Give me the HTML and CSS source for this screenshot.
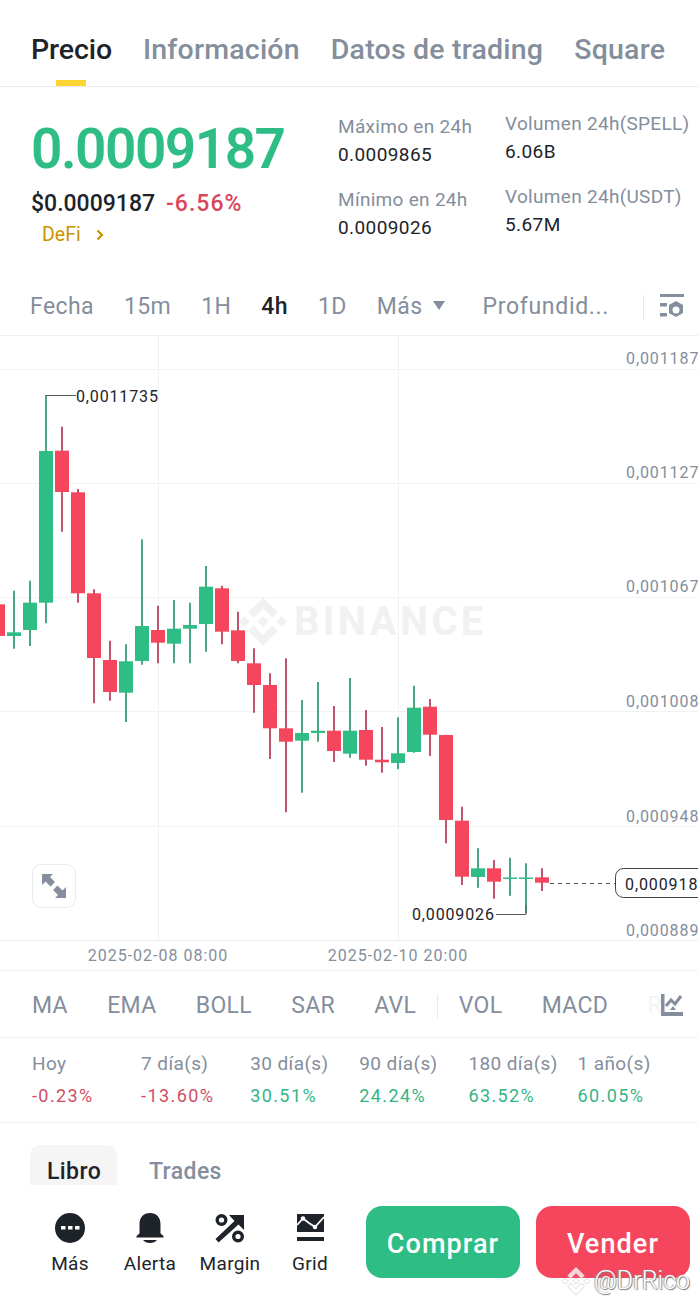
FILE: index.html
```html
<!DOCTYPE html>
<html lang="es">
<head>
<meta charset="utf-8">
<title>SPELL/USDT</title>
<link rel="stylesheet" href="styles.css">
</head>
<body>
<div class="page">
  <nav class="tabs">
    <a class="tab tab-active">Precio</a>
    <a class="tab">Información</a>
    <a class="tab">Datos de trading</a>
    <a class="tab">Square</a>
  </nav>

  <section class="summary">
    <div class="headline">
      <div class="big-price">0.0009187</div>
      <div class="sub-price"><span class="fiat">$0.0009187</span><span class="change">-6.56%</span></div>
      <div class="tag">DeFi
        <svg class="tag-arrow" viewBox="0 0 8 12" width="8" height="12"><path d="M1.500 1.500 6 6l-4.500 4.500" fill="none" stroke="#C99400" stroke-width="2.200"/></svg>
      </div>
    </div>
    <div class="stats stats-a">
      <div class="stat-label">Máximo en 24h</div>
      <div class="stat-value">0.0009865</div>
      <div class="stat-label stat-gap">Mínimo en 24h</div>
      <div class="stat-value">0.0009026</div>
    </div>
    <div class="stats stats-b">
      <div class="stat-label">Volumen 24h(SPELL)</div>
      <div class="stat-value">6.06B</div>
      <div class="stat-label stat-gap">Volumen 24h(USDT)</div>
      <div class="stat-value">5.67M</div>
    </div>
  </section>

  <div class="toolbar">
    <span>Fecha</span><span>15m</span><span>1H</span><span class="on">4h</span><span>1D</span>
    <span class="more">Más<svg viewBox="0 0 12 9" width="12" height="9"><path d="M0 0h12L6 9z" fill="#848E9C"/></svg></span>
    <span class="depth">Profundid...</span>
    <i class="vr"></i>
    <svg class="tool-icon" viewBox="0 0 24 24" width="24" height="24"><path d="M0 0h24v3H0zM0 9h7v3.500H0zM0 19h7v3.500H0z" fill="#848E9C"/><path fill-rule="evenodd" d="M16 7l7 4v8l-7 4-7-4v-8zm0 5.500a3.500 3.500 0 1 0 0 7 3.500 3.500 0 0 0 0-7z" fill="#848E9C"/></svg>
  </div>

  <div class="chart">
    <svg class="chart-svg" viewBox="0 336 698 634" width="698" height="634">
      <g class="grid">
        <path d="M0 369.500H698M0 483.500H698M0 597.500H698M0 711.500H698M0 826.500H698M158.500 336V940M398.500 336V940"/>
        <path class="grid-strong" d="M0 940.500H698"/>
      </g>
      <g class="mark" transform="translate(239 597.500) scale(.38)">
        <path d="M38.730 53.200l24.590-24.580 24.600 24.600 14.300-14.310L63.320 0 24.430 38.900z"/>
        <path d="M0 63.310 14.300 49l14.310 14.310-14.310 14.300z"/>
        <path d="M38.730 73.410 63.320 98l24.600-24.600 14.310 14.290-38.900 38.910-38.910-38.880z"/>
        <path d="M98 63.310 112.300 49l14.310 14.300-14.310 14.320z"/>
        <path d="M77.830 63.300 63.320 48.780 48.810 63.280l14.510 14.500z"/>
      </g>
      <text class="mark-text" x="294" y="635">BINANCE</text>

      <g class="wick-g">
        <path d="M14 590.700V648.700M30 580.700V646M46 395V623.300M126 644.300V722M142 539.300V664.700M174 600V663.300M190 602.700V663.300M206 566V651.700M302 700V792.700M318 682V741.700M350 678V757.700M398 717.300V769.300M414 685.700V752.700M478 848.300V887.700M510 857.700V895.700M526 863.300V913.300"/>
      </g>
      <g class="wick-r">
        <path d="M62 426.700V531.700M78 489V602.700M94 589.300V703.300M110 640.700V700.700M158 605.700V663.300M222 585.700V644.300M238 611.700V663.300M254 648.300V712.700M270 673.300V759M286 658.300V812.300M334 706V762M366 710V765.700M382 727V772.700M430 699V756M446 734.700V843.300M462 806.700V885M494 860V898.700M542 868.300V891"/>
      </g>
      <g class="body-g">
        <rect x="7" y="632.300" width="14" height="3.700"/>
        <rect x="23" y="602.700" width="14" height="27.300"/>
        <rect x="39" y="451" width="14" height="151.700"/>
        <rect x="119" y="661.300" width="14" height="31.400"/>
        <rect x="135" y="626" width="14" height="35"/>
        <rect x="167" y="628.700" width="14" height="15"/>
        <rect x="183" y="625" width="14" height="3.700"/>
        <rect x="199" y="586.700" width="14" height="37.300"/>
        <rect x="295" y="733" width="14" height="7.700"/>
        <rect x="311" y="730.700" width="14" height="2.300"/>
        <rect x="343" y="730.700" width="14" height="23"/>
        <rect x="391" y="753.300" width="14" height="9.700"/>
        <rect x="407" y="707.700" width="14" height="44.300"/>
        <rect x="471" y="868.300" width="14" height="8.700"/>
        <rect x="503" y="877.500" width="14" height="1.500"/>
        <rect x="519" y="877.500" width="14" height="1.500"/>
      </g>
      <g class="body-r">
        <rect x="-9" y="604.300" width="14" height="31.700"/>
        <rect x="55" y="450.700" width="14" height="41.300"/>
        <rect x="71" y="492.300" width="14" height="101"/>
        <rect x="87" y="593.300" width="14" height="64.700"/>
        <rect x="103" y="660" width="14" height="32"/>
        <rect x="151" y="630" width="14" height="12.700"/>
        <rect x="215" y="588.300" width="14" height="43.400"/>
        <rect x="231" y="630.300" width="14" height="30.700"/>
        <rect x="247" y="663.300" width="14" height="21.700"/>
        <rect x="263" y="685" width="14" height="43.300"/>
        <rect x="279" y="728.300" width="14" height="13.400"/>
        <rect x="327" y="730.700" width="14" height="20.300"/>
        <rect x="359" y="730" width="14" height="29.700"/>
        <rect x="375" y="759.700" width="14" height="2.600"/>
        <rect x="423" y="706.700" width="14" height="28"/>
        <rect x="439" y="735" width="14" height="85"/>
        <rect x="455" y="820.700" width="14" height="56"/>
        <rect x="487" y="868.300" width="14" height="13.400"/>
        <rect x="535" y="877.300" width="14" height="5.400"/>
      </g>

      <path class="leader" d="M46 395.500H76M496 914.500H526V905"/>
      <path class="last-line" d="M550 883.500H615"/>
      <text class="extreme" x="76" y="401.500">0,0011735</text>
      <text class="extreme" x="412" y="920">0,0009026</text>

      <g class="axis">
        <text x="626" y="364">0,001187</text>
        <text x="626" y="478">0,001127</text>
        <text x="626" y="592">0,001067</text>
        <text x="626" y="707">0,001008</text>
        <text x="626" y="822">0,000948</text>
        <text x="626" y="936">0,000889</text>
      </g>
      <rect class="last-box" x="615.500" y="868.500" width="100" height="29" rx="8"/>
      <text class="last-text" x="625" y="890">0,000918</text>
      <g class="axis axis-x">
        <text x="158" y="961">2025-02-08 08:00</text>
        <text x="398" y="961">2025-02-10 20:00</text>
      </g>
    </svg>
    <button class="expand" type="button" aria-label="Expandir">
      <svg viewBox="0 0 26 26" width="26" height="26"><path d="M1 1h11L9 4l5 5-4.500 4.500-5-5L1 12zM25 25H14l3-3-5-5 4.500-4.500 5 5L25 14z" fill="#848E9C"/></svg>
    </button>
  </div>

  <div class="indicators">
    <span>MA</span><span>EMA</span><span>BOLL</span><span>SAR</span><span>AVL</span>
    <i class="vr vr-ind"></i>
    <span>VOL</span><span>MACD</span>
    <span class="fade">R</span>
    <svg class="ind-icon" viewBox="0 0 22 22" width="22" height="22"><path d="M0 0h3.500v18H22v4H0z" fill="#848E9C"/><path d="M5 12 10 6l4 4 6-8" fill="none" stroke="#848E9C" stroke-width="3"/><path d="M9 16l3-4 3 4z" fill="#848E9C"/></svg>
  </div>

  <div class="periods">
    <div class="period"><div class="p-label">Hoy</div><div class="p-val down">-0.23%</div></div>
    <div class="period"><div class="p-label">7 día(s)</div><div class="p-val down">-13.60%</div></div>
    <div class="period"><div class="p-label">30 día(s)</div><div class="p-val up">30.51%</div></div>
    <div class="period"><div class="p-label">90 día(s)</div><div class="p-val up">24.24%</div></div>
    <div class="period"><div class="p-label">180 día(s)</div><div class="p-val up">63.52%</div></div>
    <div class="period"><div class="p-label">1 año(s)</div><div class="p-val up">60.05%</div></div>
  </div>

  <div class="book-tabs">
    <span class="book-tab book-on">Libro</span>
    <span class="book-tab">Trades</span>
  </div>

  <footer class="actions">
    <div class="action">
      <svg viewBox="0 0 30 30" width="30" height="30"><circle cx="15" cy="15" r="15" fill="#1E2329"/><path d="M6 13h4.500v3.500H6zM13 13h4.500v3.500H13zM20 13h4.500v3.500H20z" fill="#fff"/></svg>
      <span>Más</span>
    </div>
    <div class="action">
      <svg viewBox="0 0 30 30" width="30" height="30"><path d="M15 0c6.500 0 10.500 4.500 10.500 11v9.500l3 2.500v1.500H1.500V23l3-2.500V11C4.500 4.500 8.500 0 15 0z" fill="#1E2329"/><path d="M8 27h14c-1.500 2-4 3-7 3s-5.500-1-7-3z" fill="#1E2329"/></svg>
      <span>Alerta</span>
    </div>
    <div class="action">
      <svg viewBox="0 0 30 30" width="30" height="30"><path d="M14 2h15v15l-5.500-5.500L3.500 29.500 0.500 26l19-18z" fill="#1E2329"/><circle cx="6.500" cy="7" r="4.300" fill="#fff" stroke="#1E2329" stroke-width="3.400"/><circle cx="23" cy="23.500" r="4.300" fill="#fff" stroke="#1E2329" stroke-width="3.400"/></svg>
      <span>Margin</span>
    </div>
    <div class="action">
      <svg viewBox="0 0 30 30" width="30" height="30"><path d="M2 1h27v18H2zM2 24h27v4H2z" fill="#1E2329"/><path d="M2 12l6-6.500 6 4.500 6 4 9-10" fill="none" stroke="#fff" stroke-width="1.800"/><circle cx="8" cy="5.500" r="2.200" fill="#fff"/><circle cx="20" cy="14" r="2.200" fill="#fff"/></svg>
      <span>Grid</span>
    </div>
    <button class="trade buy" type="button">Comprar</button>
    <button class="trade sell" type="button">Vender</button>
  </footer>

  <div class="credit">
    <svg viewBox="0 0 126.610 126.610" width="28" height="28"><path d="M38.730 53.200l24.590-24.580 24.600 24.600 14.300-14.310L63.320 0 24.430 38.900z" fill="#fbd5da" stroke="#aaa" stroke-width="2"/><path d="M0 63.310 14.300 49l14.310 14.310-14.310 14.300zM38.730 73.410 63.320 98l24.600-24.600 14.310 14.290-38.900 38.910-38.910-38.880zM98 63.310 112.300 49l14.310 14.300-14.310 14.320zM77.830 63.300 63.320 48.780 48.810 63.280l14.510 14.500z" fill="#fff" stroke="#aaa" stroke-width="2"/></svg>
    <span>@DrRico</span>
  </div>
</div>
</body>
</html>
```
FILE: styles.css
```css
* { box-sizing: border-box; }
html, body { margin: 0; padding: 0; background: #fff; }
body { font-family: Roboto, "Noto Sans", sans-serif; color: #1e2329; }
.page { position: relative; width: 698px; height: 1303px; overflow: hidden; }

.tabs { display: flex; gap: 31px; height: 87px; padding: 30px 0 0 31px; border-bottom: 1px solid #eaecef; }
.tab { position: relative; font-size: 28.500px; line-height: 40px; font-weight: 500; color: #848e9c; letter-spacing: .2px; white-space: nowrap; }
.tab-active { color: #1e2329; letter-spacing: -.1px; }
.tab-active::after { content: ""; position: absolute; left: 25px; bottom: 0; width: 30px; height: 6px; background: #fcd535; }

.summary { display: flex; height: 193px; padding-left: 31px; }
.headline { width: 307px; padding-top: 30px; }
.big-price { font-size: 55px; line-height: 64px; font-weight: 600; color: #2ebd85; letter-spacing: -1.500px; }
.sub-price { display: flex; gap: 11px; margin-top: 6px; font-size: 23px; line-height: 34px; font-weight: 500; }
.change { color: #d9475c; letter-spacing: 1px; }
.tag { display: flex; align-items: center; gap: 15px; font-size: 19.500px; line-height: 28px; margin-left: 11px; color: #c99400; }
.stats { flex: none; }
.stats-a { width: 167px; padding-top: 26px; }
.stats-b { padding-top: 23px; }
.stat-label { font-size: 19px; line-height: 28px; letter-spacing: .3px; color: #848e9c; white-space: nowrap; }
.stat-value { font-size: 19px; line-height: 28px; letter-spacing: .4px; color: #1e2329; white-space: nowrap; }
.stat-gap { margin-top: 17px; }

.toolbar { display: flex; align-items: center; height: 56px; padding: 0 0 2px 30px; gap: 30px; border-bottom: 1px solid #eeeff1; font-size: 23px; letter-spacing: .4px; color: #848e9c; white-space: nowrap; }
.toolbar .on { color: #1e2329; font-weight: 500; }
.more { display: inline-flex; align-items: center; gap: 11px; }
.more svg { margin-bottom: 3px; }
.depth { margin-left: 7px; letter-spacing: .7px; }
.vr { display: block; width: 1px; height: 24px; background: #e6e8ea; }
.toolbar .vr { margin-left: 4px; }
.tool-icon { margin-left: -14px; margin-bottom: 2px; }

.chart { position: relative; height: 635px; border-bottom: 1px solid #eeeff1; }
.chart-svg { display: block; }
.grid path { fill: none; stroke: #f1f2f3; stroke-width: 1; }
.grid .grid-strong { stroke: #eeeff1; }
.mark path { fill: #f0f1f1; }
.mark-text { font-family: Roboto, sans-serif; font-size: 40px; font-weight: 700; fill: #f0f1f1; letter-spacing: 3.300px; }
.wick-g path { fill: none; stroke: #4aa685; stroke-width: 2; }
.wick-r path { fill: none; stroke: #c0546a; stroke-width: 2; }
.body-g rect { fill: #2ebd85; }
.body-r rect { fill: #f6465d; }
.leader { fill: none; stroke: #555b60; stroke-width: 1; }
.last-line { fill: none; stroke: #555; stroke-width: 1; stroke-dasharray: 4 4; }
.extreme { font-size: 16px; fill: #1e2329; letter-spacing: .85px; }
.axis text { font-size: 16px; fill: #848e9c; letter-spacing: .9px; }
.axis-x text { text-anchor: middle; letter-spacing: 1px; }
.last-box { fill: #fff; stroke: #444; stroke-width: 1; }
.last-text { font-size: 16px; fill: #1e2329; letter-spacing: .9px; }
.expand { position: absolute; left: 32px; top: 528px; display: flex; align-items: center; justify-content: center; width: 44px; height: 44px; padding: 0; background: #fff; border: 1px solid #eaecef; border-radius: 9px; }

.indicators { position: relative; display: flex; align-items: center; height: 67px; padding: 3px 0 0 32px; gap: 39.300px; border-bottom: 1px solid #eeeff1; font-size: 23px; letter-spacing: .3px; color: #848e9c; white-space: nowrap; }
.vr-ind { margin: 0 -19px 0 -18px; }
.fade { color: #f3f4f5; }
.ind-icon { position: absolute; left: 661px; top: 23px; }

.periods { display: grid; grid-template-columns: repeat(6, 109.100px); height: 85px; padding: 12px 0 0 32px; border-bottom: 1px solid #eeeff1; }
.p-label { font-size: 19px; line-height: 28px; letter-spacing: .4px; color: #848e9c; white-space: nowrap; }
.p-val { margin-top: 4px; font-size: 18px; line-height: 28px; letter-spacing: 1.400px; }
.down { color: #d04e64; }
.up { color: #35b585; }

.book-tabs { display: flex; height: 62px; padding: 22px 0 0 30px; gap: 15px; }
.book-tab { padding: 11px 17px 0; font-size: 23px; line-height: 32px; letter-spacing: .4px; font-weight: 500; color: #848e9c; }
.book-on { width: 87px; color: #1e2329; background: #f5f5f5; border-radius: 10px 10px 0 0; }

.actions { display: flex; align-items: flex-start; height: 118px; padding: 21px 0 0 30px; }
.action { display: flex; flex-direction: column; align-items: center; width: 80px; padding-top: 7px; font-size: 19px; line-height: 28px; letter-spacing: .3px; color: #1e2329; }
.action span { margin-top: 7px; white-space: nowrap; }
.trade { height: 72px; width: 154px; padding-top: 4px; border: 0; border-radius: 16px; font-family: inherit; font-size: 27px; font-weight: 500; color: #fff; letter-spacing: 1.100px; }
.buy { margin-left: 16px; background: #2ebd85; }
.sell { margin-left: 16px; background: #f6465d; }

.credit { position: absolute; left: 562px; top: 1266px; display: flex; align-items: center; gap: 4px; font-size: 25px; font-weight: 300; line-height: 30px; color: #fff; text-shadow: 1px 1px 1px #777, -1px 0 1px #999; white-space: nowrap; }
```
